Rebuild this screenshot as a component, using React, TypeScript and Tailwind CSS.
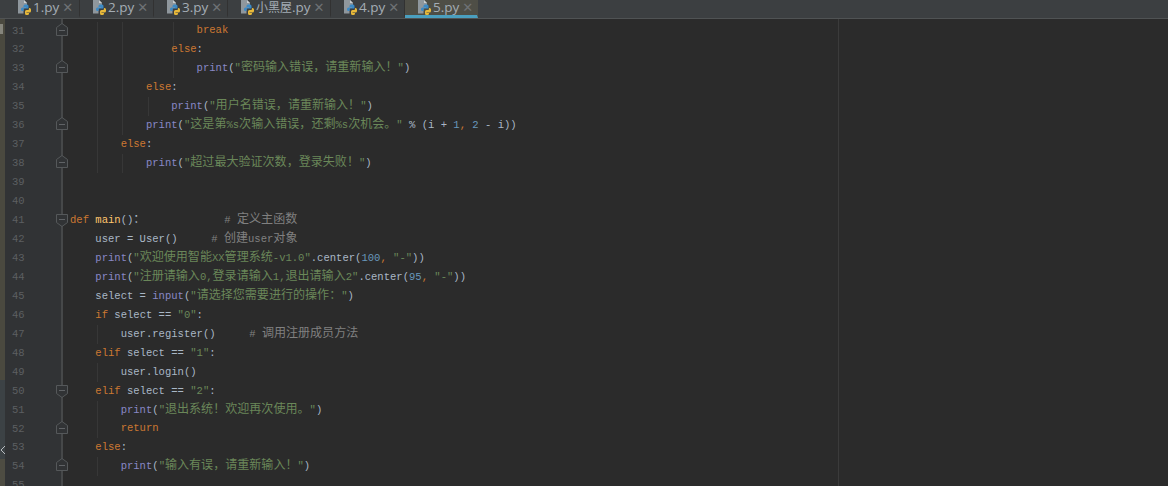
import React from "react";

type Tok = [string, string];
const K = "text-[#cc7832]";
const S = "text-[#6a8759]";
const B = "text-[#8888c6]";
const N = "text-[#6897bb]";
const F = "text-[#ffc66d]";
const T = "text-[#a9b7c6]";

type Row = { n: number; indent: number; toks: Tok[]; fold?: "end" | "start"; guides?: number[] };

const rows: Row[] = [
  { n: 31, indent: 20, toks: [["break", K]], fold: "end", guides: [97, 122, 173] },
  { n: 32, indent: 16, toks: [["else", K], [":", T]], guides: [97, 122, 173] },
  { n: 33, indent: 20, toks: [["print", B], ["(", T], ['"密码输入错误，请重新输入！"', S], [")", T]], fold: "end", guides: [97, 122, 173] },
  { n: 34, indent: 12, toks: [["else", K], [":", T]], guides: [97, 122] },
  { n: 35, indent: 16, toks: [["print", B], ["(", T], ['"用户名错误，请重新输入！"', S], [")", T]], guides: [97, 122, 148] },
  { n: 36, indent: 12, toks: [["print", B], ["(", T], ['"这是第%s次输入错误，还剩%s次机会。"', S], [" % (i + ", T], ["1", N], [", ", K], ["2", N], [" - i))", T]], fold: "end", guides: [97, 122] },
  { n: 37, indent: 8, toks: [["else", K], [":", T]], guides: [97] },
  { n: 38, indent: 12, toks: [["print", B], ["(", T], ['"超过最大验证次数，登录失败！"', S], [")", T]], fold: "end", guides: [97, 122] },
  { n: 39, indent: 0, toks: [] },
  { n: 40, indent: 0, toks: [] },
  { n: 41, indent: 0, toks: [["def ", K], ["main", F], ["()", T], ["：", T], ["            ", T], ["# 定义主函数", "text-[#808080] ml-[3px]"]], fold: "start" },
  { n: 42, indent: 4, toks: [["user = User()", T], ["     ", T], ["# 创建user对象", "text-[#808080] ml-[2px]"]] },
  { n: 43, indent: 4, toks: [["print", B], ["(", T], ['"欢迎使用智能XX管理系统-v1.0"', S], [".center(", T], ["100", N], [", ", K], ['"-"', S], ["))", T]] },
  { n: 44, indent: 4, toks: [["print", B], ["(", T], ['"注册请输入0,登录请输入1,退出请输入2"', S], [".center(", T], ["95", N], [", ", K], ['"-"', S], ["))", T]] },
  { n: 45, indent: 4, toks: [["select = ", T], ["input", B], ["(", T], ['"请选择您需要进行的操作："', S], [")", T]] },
  { n: 46, indent: 4, toks: [["if ", K], ["select == ", T], ['"0"', S], [":", T]] },
  { n: 47, indent: 8, toks: [["user.register()", T], ["     ", T], ["# 调用注册成员方法", "text-[#808080] ml-[2px]"]], guides: [97] },
  { n: 48, indent: 4, toks: [["elif ", K], ["select == ", T], ['"1"', S], [":", T]] },
  { n: 49, indent: 8, toks: [["user.login()", T]], guides: [97] },
  { n: 50, indent: 4, toks: [["elif ", K], ["select == ", T], ['"2"', S], [":", T]], fold: "start" },
  { n: 51, indent: 8, toks: [["print", B], ["(", T], ['"退出系统！欢迎再次使用。"', S], [")", T]], guides: [97] },
  { n: 52, indent: 8, toks: [["return", K]], fold: "end", guides: [97] },
  { n: 53, indent: 4, toks: [["else", K], [":", T]] },
  { n: 54, indent: 8, toks: [["print", B], ["(", T], ['"输入有误，请重新输入！"', S], [")", T]], fold: "end", guides: [97] },
  { n: 55, indent: 0, toks: [] },
];

const tabs = [
  { name: "1.py", w: "w-[75px]" },
  { name: "2.py", w: "w-[74px]" },
  { name: "3.py", w: "w-[74px]" },
  { name: "小黑屋", ext: ".py", w: "w-[103px]" },
  { name: "4.py", w: "w-[74px]" },
  { name: "5.py", w: "w-[73px]", active: true },
];

function Code({ text }: { text: string }) {
  const parts = text.split(/([\u3000-\u9fff\uff00-\uffef]+)/);
  return (
    <>
      {parts.map((p, i) =>
        i % 2 === 1 ? (
          <span key={i} className="text-[12.05px] leading-[1px] font-['Noto_Sans_CJK_SC',sans-serif]">{p}</span>
        ) : (
          <span key={i}>{p}</span>
        )
      )}
    </>
  );
}

function PyIcon() {
  return (
    <svg width="15" height="15" viewBox="0 0 15 15" className="shrink-0">
      <path d="M1 0h6l3 3v5H6.500v5.500H1z" fill="#8f979d" />
      <path d="M7 0l3 3H7z" fill="#c8cdd0" />
      <path d="M8 4.500h2A1.500 1.500 0 0 1 11.500 6v2.500H7.500A1.200 1.200 0 0 0 6.500 10v1H5.500A1.500 1.500 0 0 1 4 9.500V9A1.500 1.500 0 0 1 5.500 7.500H9V7H6.500V6A1.500 1.500 0 0 1 8 4.500z" fill="#3b8ac6" />
      <path d="M12 8h.5A1.500 1.500 0 0 1 14 9.500V11a1.500 1.500 0 0 1-1.500 1.500H9.500v.5H12v.5A1.500 1.500 0 0 1 10.500 15h-1A1.500 1.500 0 0 1 8 13.500v-2A1.500 1.500 0 0 1 9.500 10H11a1 1 0 0 0 1-1z" fill="#e8b93a" />
    </svg>
  );
}

function Fold({ kind }: { kind: "end" | "start" }) {
  return (
    <svg width="12" height="13" viewBox="0 0 12 13" className={`absolute left-[56px] ${kind === "end" ? "top-[1px]" : "top-[3px]"}`}>
      {kind === "end" ? (
        <path d="M.5 12.500V4.500L6 .5l5.500 4v8z" fill="#313335" stroke="#55585a" />
      ) : (
        <path d="M.5 .5v8L6 12.500l5.500-4v-8z" fill="#313335" stroke="#55585a" />
      )}
      <path d={kind === "end" ? "M3 7.500h6" : "M3 5.500h6"} stroke="#606366" />
    </svg>
  );
}

export default function App() {
  return (
    <div className="w-[1168px] h-[486px] overflow-hidden bg-[#2b2b2b] flex flex-col font-['Liberation_Mono','Noto_Sans_CJK_SC',monospace]">
      <div className="h-[19px] shrink-0 bg-[#3c3f41] border-b border-[#505354] flex pl-[5px] font-['Open_Sans','Noto_Sans_CJK_SC',sans-serif]">
        {tabs.map((t) => (
          <div
            key={t.name}
            className={`${t.w} h-[18px] flex items-center pl-[12px] border-b-[3px] border-r ${t.active ? "bg-[#4e4e46] border-b-[#4a9fbf] border-r-transparent" : "border-b-transparent border-r-[#323232]"}`}
          >
            <PyIcon />
            {t.ext ? (
              <span className="ml-[1px] text-[13.5px] leading-[15px] text-[#a4adb5] whitespace-nowrap">
                <span className="text-[12px] leading-[1px]">{t.name}</span>
                {t.ext}
              </span>
            ) : (
              <span className="ml-[1px] text-[13.5px] leading-[15px] text-[#a4adb5] whitespace-nowrap">{t.name}</span>
            )}
            <span className="ml-[3px] text-[13px] leading-[15px] text-[#6e7275] font-['DejaVu_Sans']">✕</span>
          </div>
        ))}
      </div>
      <div className="relative flex-1 pt-[2.5px]">
        <div className="absolute left-[838px] top-0 bottom-0 w-[1px] bg-[#3b3b3b]" />
        <div className="absolute left-0 top-0 bottom-0 w-[62px] bg-[#313335] flex flex-col">
          <div className="h-[361px] w-[5px] bg-[#4a493f]">
            <div className="mt-[5px] h-[10px] w-[3px] bg-[#85857c]" />
          </div>
          <div className="h-[79px] w-[5px] bg-[#3c4245]" />
          <div className="flex-1 w-[5px] bg-[#4d4c42]" />
        </div>
        <div className="absolute left-[61px] top-0 bottom-0 w-[2px] bg-[#464849]" />
        <svg width="6" height="10" viewBox="0 0 6 10" className="absolute left-0 top-[426px]">
          <path d="M5 1L1 5l4 4" fill="none" stroke="#b8bcc0" />
        </svg>
        {rows.map((r) => (
          <div key={r.n} className="relative h-[18.96px] flex items-center">
            <div className="relative w-[70px] h-full shrink-0">
              <span className="absolute left-[12px] top-[2px] text-[10.5px] leading-[15px] text-[#5c5f61]">{r.n}</span>
              {r.fold && <Fold kind={r.fold} />}
            </div>
            {(r.guides ?? []).map((g) => (
              <div key={g} style={{ left: g }} className="absolute top-0 bottom-0 w-[1px] bg-[#373737]" />
            ))}
            <div style={{ paddingLeft: r.indent * 6.33 }} className="relative whitespace-pre text-[10.55px] leading-[15px]">
              {r.toks.map(([text, cls], i) => (
                <span key={i} className={cls}><Code text={text} /></span>
              ))}
            </div>
          </div>
        ))}
      </div>
    </div>
  );
}
